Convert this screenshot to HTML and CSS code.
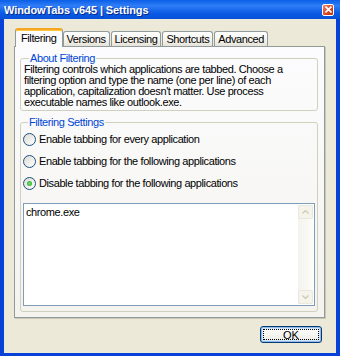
FILE: index.html
```html
<!DOCTYPE html>
<html lang="en">
<head>
    <meta charset="UTF-8">
    <title>WindowTabs v645 | Settings</title>
    <link rel="stylesheet" href="styles.css">
</head>
<body>
    <div class="window">
        <div class="titlebar">
            <span class="title">WindowTabs v645 | Settings</span>
            <span class="close">
                <svg width="7" height="7" viewBox="0 0 7 7"><path d="M0.5 0.5 L6.5 6.5 M6.5 0.5 L0.5 6.5" stroke="#fff" stroke-width="1.6"/></svg>
            </span>
        </div>
        <div class="frame">
            <div class="client">
                <div class="tabs">
                    <div class="tab selected">Filtering</div>
                    <div class="tab">Versions</div>
                    <div class="tab">Licensing</div>
                    <div class="tab">Shortcuts</div>
                    <div class="tab">Advanced</div>
                </div>
                <div class="panel">
                    <fieldset class="group about">
                        <legend>About Filtering</legend>
                        <p>Filtering controls which applications are tabbed. Choose a filtering option and type the name (one per line) of each application, capitalization doesn't matter. Use process executable names like outlook.exe.</p>
                    </fieldset>
                    <fieldset class="group settings">
                        <legend>Filtering Settings</legend>
                        <label class="option"><span class="radio"></span>Enable tabbing for every application</label>
                        <label class="option"><span class="radio"></span>Enable tabbing for the following applications</label>
                        <label class="option"><span class="radio checked"></span>Disable tabbing for the following applications</label>
                        <div class="listbox">
                            <div class="list-text">chrome.exe</div>
                            <div class="scrollbar">
                                <div class="sb-btn">
                                    <svg width="7" height="4" viewBox="0 0 7 4"><path d="M0.5 3.5 L3.5 0.5 L6.5 3.5" fill="none" stroke="#c9c7ba" stroke-width="1.2"/></svg>
                                </div>
                                <div class="sb-btn">
                                    <svg width="7" height="4" viewBox="0 0 7 4"><path d="M0.5 0.5 L3.5 3.5 L6.5 0.5" fill="none" stroke="#c9c7ba" stroke-width="1.2"/></svg>
                                </div>
                            </div>
                        </div>
                    </fieldset>
                </div>
                <div class="footer">
                    <button class="btn">OK</button>
                </div>
            </div>
        </div>
    </div>
</body>
</html>
```

FILE: styles.css
```css
* {
    box-sizing: border-box;
}
body {
    margin: 0;
    font-family: "Liberation Sans", Arial, sans-serif;
    font-size: 11px;
    letter-spacing: -0.4px;
    color: #000;
    background: #fff;
}
.window {
    width: 340px;
    height: 356px;
    display: flex;
    flex-direction: column;
}
.titlebar {
    height: 19px;
    display: flex;
    align-items: center;
    justify-content: space-between;
    padding: 0 6px 0 4px;
    background: linear-gradient(#0a5fe8, #2f7df6 30%, #0a5ae4 70%, #0650d8);
}
.title {
    color: #fff;
    font-weight: bold;
    font-size: 11px;
    letter-spacing: -0.1px;
    text-shadow: 1px 1px 0 #0c2a8a;
}
.close {
    width: 12px;
    height: 12px;
    display: flex;
    align-items: center;
    justify-content: center;
    background: linear-gradient(135deg, #f08a6e, #d8431c 60%, #c03412);
    border: 1px solid #fff;
    border-radius: 2px;
}
.frame {
    flex: 1;
    display: flex;
    border: 4px solid #0841d8;
    border-top: none;
    border-bottom-width: 3px;
}
.client {
    flex: 1;
    display: flex;
    flex-direction: column;
    background: #ece9d8;
    padding: 9px 11px 0 10px;
}
.tabs {
    display: flex;
    align-items: flex-end;
    height: 18px;
    padding-left: 1px;
    position: relative;
    z-index: 1;
}
.tab {
    height: 15px;
    line-height: 14px;
    padding: 0 3px;
    margin-right: 1px;
    border: 1px solid #919b9c;
    border-bottom: none;
    border-radius: 3px 3px 0 0;
    background: linear-gradient(#ffffff, #f3f2ec 60%, #e6e4d8);
}
.tab.selected {
    height: 19px;
    line-height: 16px;
    margin-right: 0;
    margin-bottom: -1px;
    padding: 0 5px;
    border-top: 2px solid #f5a623;
    box-shadow: inset 0 1px 0 #ffc83c;
    background: #fcfcfe;
}
.panel {
    height: 272px;
    border: 1px solid #919b9c;
    box-shadow: 1px 1px 0 #c9c6b6;
    background: linear-gradient(#fcfcfe, #f4f3ee);
    padding: 5px 6px 0 5px;
}
.group {
    margin: 0;
    border: 1px solid #d0d0bf;
    border-radius: 3px;
    padding: 0;
}
.group legend {
    color: #0046d5;
    padding: 0 1px;
    margin-left: 5px;
    line-height: 12px;
}
.about {
    height: 59px;
    padding: 0 3px;
}
.about p {
    margin: 0;
    line-height: 11px;
}
.settings {
    margin-top: 5px;
    height: 196px;
    padding: 0 2px 4px 2px;
}
.option {
    display: flex;
    align-items: center;
    height: 22px;
}
.radio {
    width: 13px;
    height: 13px;
    border: 1px solid #1c5180;
    border-radius: 50%;
    background: linear-gradient(135deg, #dcdad2, #ffffff);
    margin-right: 3px;
    display: flex;
    align-items: center;
    justify-content: center;
}
.radio.checked::after {
    content: "";
    width: 5px;
    height: 5px;
    border-radius: 50%;
    background: radial-gradient(#6fe16f, #21a121);
}
.listbox {
    margin-top: 9px;
    height: 103px;
    border: 1px solid #7f9db9;
    background: #fff;
    display: flex;
}
.list-text {
    flex: 1;
    padding: 2px 2px;
    line-height: 12px;
}
.scrollbar {
    width: 15px;
    margin: 1px 1px 1px 0;
    display: flex;
    flex-direction: column;
    justify-content: space-between;
    background: linear-gradient(90deg, #f4f3ee, #fcfcf8);
}
.sb-btn {
    height: 14px;
    border: 1px solid #e9e8df;
    border-radius: 2px;
    background: #f5f4ea;
    display: flex;
    align-items: center;
    justify-content: center;
}
.footer {
    display: flex;
    justify-content: flex-end;
    padding: 8px 3px 0 0;
}
.btn {
    width: 62px;
    height: 17px;
    font-family: "Liberation Sans", Arial, sans-serif;
    font-size: 11px;
    padding: 0;
    border: 1px solid #003c74;
    border-radius: 3px;
    background: linear-gradient(#ffffff, #f0f0ea 80%, #d6d0c5);
    box-shadow: inset 0 0 0 1px #98b8ea, inset 0 0 0 2px #cee7ff;
    outline: 1px dotted #000;
    outline-offset: -4px;
}
```
